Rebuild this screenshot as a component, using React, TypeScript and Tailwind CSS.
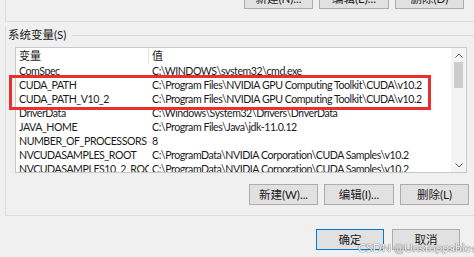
const rows: [string, string][] = [
  ['ComSpec', 'C:\\WINDOWS\\system32\\cmd.exe'],
  ['CUDA_PATH', 'C:\\Program Files\\NVIDIA GPU Computing Toolkit\\CUDA\\v10.2'],
  ['CUDA_PATH_V10_2', 'C:\\Program Files\\NVIDIA GPU Computing Toolkit\\CUDA\\v10.2'],
  ['DriverData', 'C:\\Windows\\System32\\Drivers\\DriverData'],
  ['JAVA_HOME', 'C:\\Program Files\\Java\\jdk-11.0.12'],
  ['NUMBER_OF_PROCESSORS', '8'],
  ['NVCUDASAMPLES_ROOT', 'C:\\ProgramData\\NVIDIA Corporation\\CUDA Samples\\v10.2'],
  ['NVCUDASAMPLES10_2_ROOT', 'C:\\ProgramData\\NVIDIA Corporation\\CUDA Samples\\v10.2'],
];

function Btn({ label, focused = false, w = 'w-[69px]' }: { label: string; focused?: boolean; w?: string }) {
  return (
    <div
      className={`${w} h-[21px] flex items-center justify-center text-[11.5px] text-[#1a1a1a] bg-[#e1e1e1] border ${
        focused ? 'border-[#0078d7]' : 'border-[#adadad]'
      }`}
    >
      {label}
    </div>
  );
}

function Chevron({ up }: { up?: boolean }) {
  return (
    <svg width="8" height="5" viewBox="0 0 8 5" className="text-[#606060]">
      <path d={up ? 'M0.5 4.5 L4 1 L7.5 4.5' : 'M0.5 0.5 L4 4 L7.5 0.5'} fill="none" stroke="currentColor" strokeWidth="1" />
    </svg>
  );
}

export default function App() {
  return (
    <div
      className="relative w-[474px] h-[257px] overflow-hidden bg-[#f0f0f0] text-[#1a1a1a]"
      style={{ fontFamily: 'Lato, "Noto Sans CJK SC", sans-serif' }}
    >
      {/* user variables group (clipped) */}
      <div className="ml-[5px] h-[22px] border-l border-b border-[#dcdcdc] flex justify-end pr-[10px]">
        <div className="-mt-[12px] flex gap-[6px]">
          <Btn label="新建(N)..." />
          <Btn label="编辑(E)..." w="w-[70px]" />
          <Btn label="删除(D)" />
        </div>
      </div>

      {/* system variables group */}
      <div className="ml-[5px] mt-[5px] h-[189px] border-l border-b border-[#dcdcdc] flex flex-col">
        <div className="flex items-center h-[16px]">
          <span className="pl-[2px] pr-[6px] text-[11.5px] leading-none">系统变量(S)</span>
          <div className="flex-1 h-px bg-[#dcdcdc]" />
        </div>

        <div className="relative ml-[9px] mt-[4px] w-[452px] h-[126px] bg-white border border-[#c8c8c8] flex overflow-hidden">
          <div className="flex-1 min-w-0 flex flex-col text-[10.6px] tracking-[-0.45px] leading-[14px] overflow-hidden">
            <div className="flex h-[16px] shrink-0 items-center text-[11px] tracking-normal">
              <div className="w-[133px] shrink-0 pl-[3px] border-r border-[#e5e5e5] h-full flex items-center">变量</div>
              <div className="pl-[3px]">值</div>
            </div>
            {rows.map(([k, v]) => (
              <div key={k} className="flex h-[14px] shrink-0 items-center whitespace-nowrap">
                <div className="w-[133px] shrink-0 pl-[3px] overflow-hidden">{k}</div>
                <div className="pl-[3px]">{v}</div>
              </div>
            ))}
          </div>
          <div className="w-[15px] shrink-0 bg-[#f4f4f4] flex flex-col items-center">
            <div className="h-[14px] flex items-center justify-center">
              <Chevron up />
            </div>
            <div className="w-[9px] h-[26px] bg-[#cdcdcd]" />
            <div className="flex-1" />
            <div className="h-[14px] flex items-center justify-center">
              <Chevron />
            </div>
          </div>
        </div>

        <div className="mt-[11px] flex justify-end gap-[6px] pr-[5px]">
          <Btn label="新建(W)..." />
          <Btn label="编辑(I)..." w="w-[70px]" />
          <Btn label="删除(L)" />
        </div>
      </div>

      {/* dialog buttons */}
      <div className="mt-[13px] flex justify-end gap-[8px] pr-[14px]">
        <Btn label="确定" focused w="w-[68px]" />
        <Btn label="取消" w="w-[68px]" />
      </div>

      {/* highlight box */}
      <div className="absolute left-[9px] top-[75px] w-[422px] h-[35px] border-[3px] border-[#e8302c]" />

      {/* watermark */}
      <div className="absolute z-10 left-[358px] top-[239px] flex items-baseline whitespace-nowrap text-[#f4f4f4] [text-shadow:0_0_1px_#6a6a6a,0_0_1px_#6a6a6a]">
        <span className="text-[12px]">CSDN @Unstoppable</span>
        <span className="text-[7px] ml-[1px]">老师帮</span>
      </div>
    </div>
  );
}
